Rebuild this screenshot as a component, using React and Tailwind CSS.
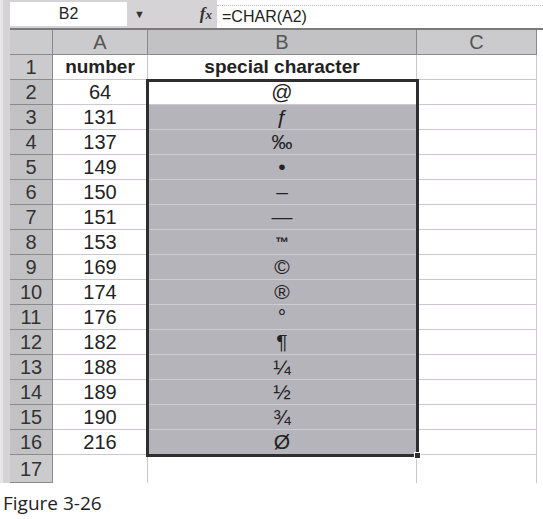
import React from 'react';

const rows = [
  ['64', '@'],
  ['131', 'ƒ'],
  ['137', '‰'],
  ['149', '•'],
  ['150', '–'],
  ['151', '—'],
  ['153', '™'],
  ['169', '©'],
  ['174', '®'],
  ['176', '°'],
  ['182', '¶'],
  ['188', '¼'],
  ['189', '½'],
  ['190', '¾'],
  ['216', 'Ø'],
];

const Strip = () => (
  <div className="w-[10px] shrink-0 self-stretch bg-[#d6d3d6] border-l-[3px] border-[#e8e6e8]" />
);

const RowHead = ({ children, selected }) => (
  <div
    className={`w-[43px] shrink-0 flex items-center justify-center border-r border-b border-[#8a8a8a] text-[20px] text-[#333] ${
      selected ? 'bg-[#c2c2c4]' : 'bg-[#cbcbcd]'
    }`}
  >
    {children}
  </div>
);

export default function App() {
  return (
    <div
      className="w-[543px] h-[519px] bg-white relative overflow-hidden text-[#222]"
      style={{ fontFamily: '"Liberation Sans", Arial, sans-serif' }}
    >
      {/* formula bar */}
      <div className="flex h-[28px]">
        <Strip />
        <div className="flex items-stretch bg-[#d6d3d6] w-[207px] py-[2px]">
          <div className="w-[117px] bg-white flex items-center justify-center text-[16px]">B2</div>
          <div className="flex-1 flex items-center">
            <span className="ml-[7px] text-[11px] text-[#333]">▼</span>
            <span className="ml-auto mr-[5px] text-[17px] italic font-bold text-[#333]" style={{ fontFamily: '"Liberation Serif", serif' }}>
              f<span className="text-[13px]">x</span>
            </span>
          </div>
        </div>
        <div className="flex-1 flex items-center border-t border-dotted border-[#bbb] mt-[5px] pl-[5px] text-[16px]">
          =CHAR(A2)
        </div>
      </div>

      {/* column headers */}
      <div className="flex h-[27px]">
        <Strip />
        <div className="flex flex-1 border-t-2 border-[#7a7a7a]">
          <div className="w-[43px] shrink-0 bg-[#cbcbcd] border-r border-b border-[#8a8a8a]" />
          <div className="w-[95px] shrink-0 bg-[#cbcbcd] border-r border-b border-[#8a8a8a] flex items-center justify-center text-[20px] text-[#555]">A</div>
          <div className="w-[269px] shrink-0 bg-[#c2c2c4] border-r border-b border-[#8a8a8a] flex items-center justify-center text-[20px] text-[#555]">B</div>
          <div className="w-[120px] shrink-0 bg-[#cbcbcd] border-r border-b border-[#8a8a8a] flex items-center justify-center text-[20px] text-[#555]">C</div>
          <div className="flex-1" />
        </div>
      </div>

      {/* row 1 */}
      <div className="flex h-[25px]">
        <Strip />
        <RowHead>1</RowHead>
        <div className="w-[95px] shrink-0 border-r border-b border-[#cdc6ce] flex items-center justify-center font-bold text-[19px]">number</div>
        <div className="w-[269px] shrink-0 border-r border-b border-[#cdc6ce] flex items-center justify-center font-bold text-[19px]">special character</div>
        <div className="w-[120px] shrink-0 border-r border-b border-[#cdc6ce]" />
      </div>

      {rows.map(([n, ch], i) => (
        <div key={n} className="flex h-[25px]">
          <Strip />
          <RowHead selected>{i + 2}</RowHead>
          <div className="w-[95px] shrink-0 border-r border-b border-[#cdc6ce] flex items-center justify-center text-[20px]">{n}</div>
          <div
            className={`w-[269px] shrink-0 border-r border-b flex items-center justify-center ${
              i === 0 ? 'bg-white border-[#cdc6ce]' : 'bg-[#b5b4ba] border-[#cfcdd2]'
            } ${ch === '™' ? 'text-[14px] font-bold' : 'text-[21px]'}`}
          >
            {ch}
          </div>
          <div className="w-[120px] shrink-0 border-r border-b border-[#cdc6ce]" />
        </div>
      ))}

      {/* row 17 */}
      <div className="flex h-[28px]">
        <Strip />
        <RowHead>17</RowHead>
        <div className="w-[95px] shrink-0 border-r border-[#cdc6ce]" />
        <div className="w-[269px] shrink-0 border-r border-[#cdc6ce]" />
        <div className="w-[120px] shrink-0 border-r border-[#cdc6ce]" />
      </div>

      <div className="pl-[3px] pt-[6px] text-[19px] text-[#222]" style={{ fontFamily: '"Open Sans", sans-serif' }}>
        Figure 3-26
      </div>

      {/* selection outline */}
      <div className="absolute left-[146px] top-[79px] w-[273px] h-[378px] border-[3px] border-[#2e2e30] pointer-events-none" />
      <div className="absolute left-[414px] top-[452px] w-[7px] h-[7px] bg-[#2e2e30] border border-white" />
    </div>
  );
}
